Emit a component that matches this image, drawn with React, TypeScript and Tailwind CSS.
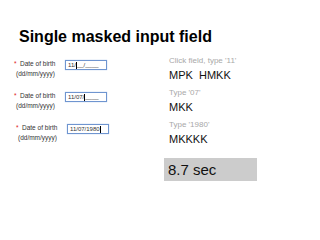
export default function App() {
  return (
    <div className="w-[320px] h-[240px] bg-white overflow-hidden" style={{ fontFamily: '"Liberation Sans", Arial, sans-serif' }}>
      <h1 className="pl-[19px] pt-[27px] text-[16px] leading-[20px] font-bold text-black">Single masked input field</h1>
      <div className="mt-[9px] flex flex-col">
        <Row typed="11/" rest="__/____" hint="Click field, type '11'" result="MPK  HMKK" />
        <Row typed="11/07/" rest="____" hint="Type '07'" result="MKK" />
        <Row typed="11/07/1980" rest="" hint="Type '1980'" result="MKKKK" shift />
      </div>
      <div className="ml-[164px] mt-[6px] w-[93px] h-[23px] bg-[#cccccc] flex items-center pl-[4px]">
        <span className="text-[15px] leading-[16px] text-[#111]">8.7 sec</span>
      </div>
    </div>
  );
}

function Row({
  typed,
  rest,
  hint,
  result,
  shift,
}: {
  typed: string;
  rest: string;
  hint: string;
  result: string;
  shift?: boolean;
}) {
  return (
    <div className="flex h-[32px]">
      <div className={`w-[169px] flex items-start pt-[3px] ${shift ? "pl-[16px]" : "pl-[14px]"}`}>
        <div className="w-[50px] text-[6.5px] leading-[10px] text-[#333]">
          <div className="flex">
            <span className="text-[#e02020] w-[6px]">*</span>
            <span>Date of birth</span>
          </div>
          <div className="pl-[2px]">(dd/mm/yyyy)</div>
        </div>
        <div className="ml-[1px] mt-[1px] w-[42px] h-[10px] border border-[#6f95d0] shadow-[0_0_1px_#9fbbe6] flex items-center px-[2px] text-[6px] leading-[8px] text-[#333] overflow-hidden whitespace-pre">
          <span>{typed}</span>
          <span className="w-px h-[7px] bg-black" />
          <span>{rest}</span>
        </div>
      </div>
      <div className="flex flex-col">
        <span className="text-[8px] leading-[10px] text-[#a8a8a8]">{hint}</span>
        <span className="mt-[3px] text-[11px] leading-[13px] text-[#111] whitespace-pre">{result}</span>
      </div>
    </div>
  );
}
